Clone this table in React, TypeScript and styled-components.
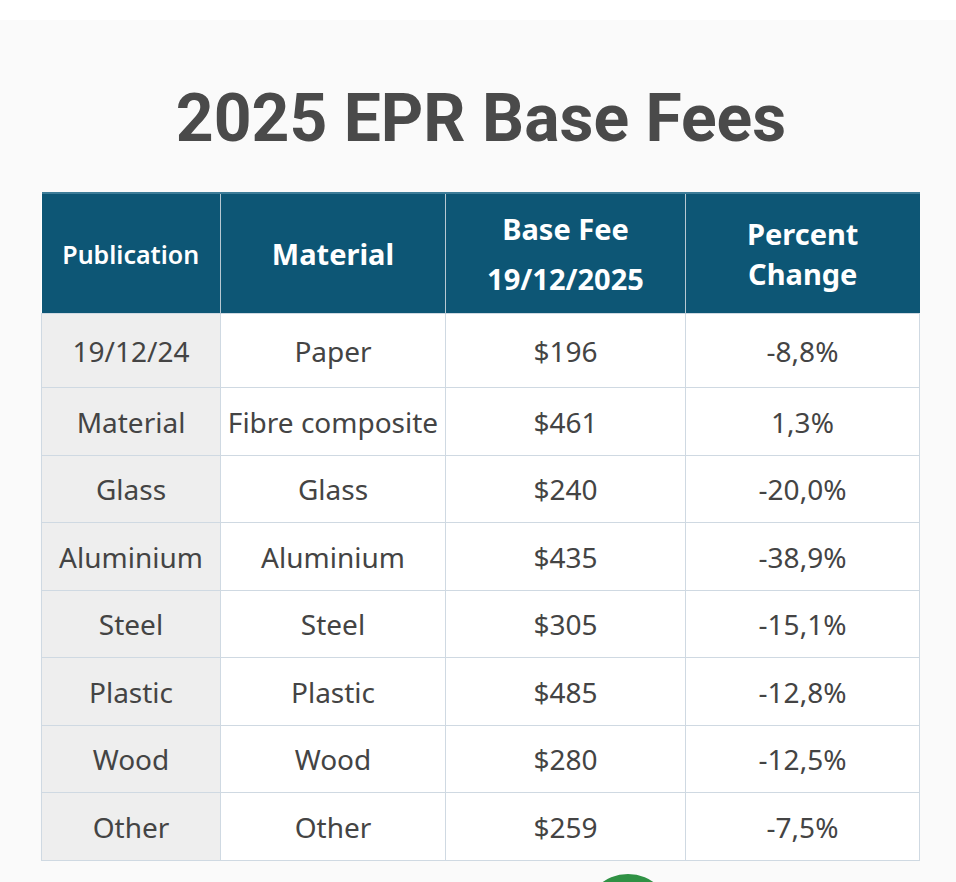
import React from 'react'
import styled, { createGlobalStyle } from 'styled-components'

const GlobalStyle = createGlobalStyle`
  html, body {
    margin: 0;
    padding: 0;
    background: #ffffff;
  }
  body {
    font-family: 'Noto Sans', 'Open Sans', sans-serif;
    overflow: hidden;
  }
`

const Page = styled.div`
  margin-top: 20px;
  height: 862px;
  background: #fafafa;
  overflow: hidden;
  display: flex;
  flex-direction: column;
  align-items: flex-start;

  > * {
    flex-shrink: 0;
  }
`

const Title = styled.h1`
  align-self: stretch;
  margin: 64px 0 0 0;
  height: 108px;
  text-align: center;
  font-family: Roboto, 'Liberation Sans', sans-serif;
  font-weight: 700;
  font-size: 66px;
  line-height: 70px;
  color: #4a4a4a;
  padding-left: 6px;
`

const Table = styled.table`
  margin-left: 41px;
  width: 878px;
  border-collapse: collapse;
  table-layout: fixed;
  background: #ffffff;
  color: #444444;
`

const HeadCell = styled.th<{ $small?: boolean; $lh?: number }>`
  height: 119px;
  padding: 0;
  background: #0d5675;
  color: #ffffff;
  font-family: 'Noto Sans', 'Open Sans', sans-serif;
  font-weight: ${p => (p.$small ? 600 : 700)};
  font-size: ${p => (p.$small ? '25px' : '29px')};
  line-height: ${p => p.$lh ?? 40}px;
  border-left: 1px solid #b7c8d2;
  border-top: 2px solid #3d7c98;
  &:first-child {
    border-left: none;
  }
`

const Row = styled.tr<{ $h: number }>`
  height: ${p => p.$h}px;
`

const Cell = styled.td<{ $side?: boolean }>`
  padding: 0;
  text-align: center;
  font-family: 'Noto Sans', 'Open Sans', sans-serif;
  font-size: 28px;
  color: #444444;
  border: 1px solid #cfd9e2;
  background: ${p => (p.$side ? '#eeeeee' : '#ffffff')};
  white-space: nowrap;
  overflow: hidden;
`

const Badge = styled.div`
  margin-top: 13px;
  margin-left: 584px;
  width: 88px;
  height: 88px;
  border-radius: 50%;
  background: #2f9144;
`

const rows = [
  ['19/12/24', 'Paper', '$196', '-8,8%'],
  ['Material', 'Fibre composite', '$461', '1,3%'],
  ['Glass', 'Glass', '$240', '-20,0%'],
  ['Aluminium', 'Aluminium', '$435', '-38,9%'],
  ['Steel', 'Steel', '$305', '-15,1%'],
  ['Plastic', 'Plastic', '$485', '-12,8%'],
  ['Wood', 'Wood', '$280', '-12,5%'],
  ['Other', 'Other', '$259', '-7,5%'],
]

const heights = [74, 68, 67, 68, 67, 68, 67, 68]

export default function App() {
  return (
    <>
      <GlobalStyle />
      <Page>
        <Title>2025 EPR Base Fees</Title>
        <Table>
          <colgroup>
            <col style={{ width: 179 }} />
            <col style={{ width: 225 }} />
            <col style={{ width: 240 }} />
            <col style={{ width: 234 }} />
          </colgroup>
          <thead>
            <tr>
              <HeadCell $small>Publication</HeadCell>
              <HeadCell>Material</HeadCell>
              <HeadCell $lh={50}>
                Base Fee
                <br />
                19/12/2025
              </HeadCell>
              <HeadCell>
                Percent
                <br />
                Change
              </HeadCell>
            </tr>
          </thead>
          <tbody>
            {rows.map((r, i) => (
              <Row key={i} $h={heights[i]}>
                <Cell $side>{r[0]}</Cell>
                <Cell>{r[1]}</Cell>
                <Cell>{r[2]}</Cell>
                <Cell>{r[3]}</Cell>
              </Row>
            ))}
          </tbody>
        </Table>
        <Badge />
      </Page>
    </>
  )
}
